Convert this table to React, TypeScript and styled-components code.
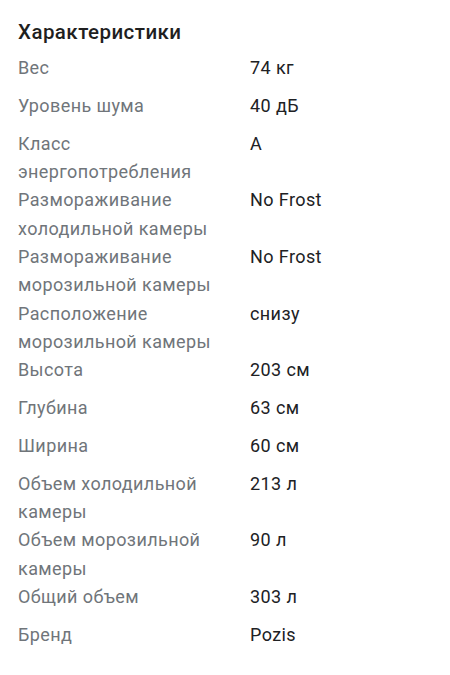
import React from "react";
import styled, { createGlobalStyle } from "styled-components";

const GlobalStyle = createGlobalStyle`
    body {
        margin: 0;
        background: #ffffff;
        font-family: Roboto, "Noto Sans", sans-serif;
    }
`;

const Section = styled.section`
    padding: 18px 18px 0 18px;
`;

const Title = styled.h2`
    margin: 0 0 8px 0;
    font-size: 20.5px;
    line-height: 28px;
    font-weight: 500;
    letter-spacing: 0.45px;
    color: #1f1f1f;
`;

const SpecList = styled.dl`
    margin: 0;
    padding: 0;
`;

const SpecRow = styled.div`
    display: grid;
    grid-template-columns: 232px 1fr;
    min-height: 37.8px;
    align-items: start;
`;

const Label = styled.dt`
    margin: 0;
    padding-right: 14px;
    font-size: 18px;
    line-height: 28.35px;
    letter-spacing: 0.4px;
    color: #70757a;
`;

const Value = styled.dd`
    margin: 0;
    font-size: 18px;
    line-height: 28.35px;
    letter-spacing: 0.4px;
    color: #202124;
`;

const specs: [string, string][] = [
    ["Вес", "74 кг"],
    ["Уровень шума", "40 дБ"],
    ["Класс энергопотребления", "A"],
    ["Размораживание холодильной камеры", "No Frost"],
    ["Размораживание морозильной камеры", "No Frost"],
    ["Расположение морозильной камеры", "снизу"],
    ["Высота", "203 см"],
    ["Глубина", "63 см"],
    ["Ширина", "60 см"],
    ["Объем холодильной камеры", "213 л"],
    ["Объем морозильной камеры", "90 л"],
    ["Общий объем", "303 л"],
    ["Бренд", "Pozis"],
];

const App: React.FC = () => {
    return (
        <>
            <GlobalStyle />
            <Section>
                <Title>Характеристики</Title>
                <SpecList>
                    {specs.map(([label, value]) => (
                        <SpecRow key={label}>
                            <Label>{label}</Label>
                            <Value>{value}</Value>
                        </SpecRow>
                    ))}
                </SpecList>
            </Section>
        </>
    );
};

export default App;
